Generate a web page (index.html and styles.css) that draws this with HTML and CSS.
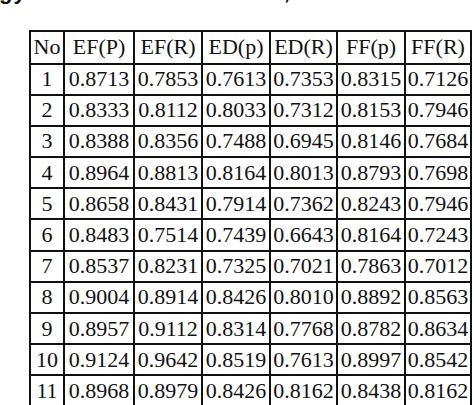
FILE: index.html
```html
<!DOCTYPE html>
<html>
<head>
<meta charset="utf-8">
<link rel="stylesheet" href="styles.css">
</head>
<body>
<div class="caption"><span class="c-g">g</span><span class="c-y">y</span><span class="c-comma">,</span></div>
<table class="results">
<colgroup>
<col class="w-no"><col class="w-a"><col class="w-b"><col class="w-b"><col class="w-c"><col class="w-b"><col class="w-d">
</colgroup>
<thead>
<tr><th>No</th><th>EF(P)</th><th>EF(R)</th><th>ED(p)</th><th>ED(R)</th><th>FF(p)</th><th>FF(R)</th></tr>
</thead>
<tbody>
<tr><td>1</td><td>0.8713</td><td>0.7853</td><td>0.7613</td><td>0.7353</td><td>0.8315</td><td>0.7126</td></tr>
<tr><td>2</td><td>0.8333</td><td>0.8112</td><td>0.8033</td><td>0.7312</td><td>0.8153</td><td>0.7946</td></tr>
<tr><td>3</td><td>0.8388</td><td>0.8356</td><td>0.7488</td><td>0.6945</td><td>0.8146</td><td>0.7684</td></tr>
<tr><td>4</td><td>0.8964</td><td>0.8813</td><td>0.8164</td><td>0.8013</td><td>0.8793</td><td>0.7698</td></tr>
<tr><td>5</td><td>0.8658</td><td>0.8431</td><td>0.7914</td><td>0.7362</td><td>0.8243</td><td>0.7946</td></tr>
<tr><td>6</td><td>0.8483</td><td>0.7514</td><td>0.7439</td><td>0.6643</td><td>0.8164</td><td>0.7243</td></tr>
<tr><td>7</td><td>0.8537</td><td>0.8231</td><td>0.7325</td><td>0.7021</td><td>0.7863</td><td>0.7012</td></tr>
<tr><td>8</td><td>0.9004</td><td>0.8914</td><td>0.8426</td><td>0.8010</td><td>0.8892</td><td>0.8563</td></tr>
<tr><td>9</td><td>0.8957</td><td>0.9112</td><td>0.8314</td><td>0.7768</td><td>0.8782</td><td>0.8634</td></tr>
<tr><td>10</td><td>0.9124</td><td>0.9642</td><td>0.8519</td><td>0.7613</td><td>0.8997</td><td>0.8542</td></tr>
<tr><td>11</td><td>0.8968</td><td>0.8979</td><td>0.8426</td><td>0.8162</td><td>0.8438</td><td>0.8162</td></tr>
</tbody>
</table>
</body>
</html>
```
FILE: styles.css
```css
html, body {
  margin: 0;
  padding: 0;
  background: #ffffff;
  overflow: hidden;
}
body {
  width: 474px;
  height: 405px;
}
.caption {
  display: flex;
  font-family: "Liberation Sans", Arial, sans-serif;
  font-weight: bold;
  font-size: 22px;
  line-height: 22px;
  height: 22px;
  margin-top: -19px;
  color: #111;
}
.c-g { margin-left: -1px; }
.c-y { margin-left: 1px; }
.c-comma { margin-left: 258px; }
.results {
  border-collapse: collapse;
  margin-top: 27px;
  margin-left: 29px;
  width: 441px;
  font-family: "Liberation Serif", "Times New Roman", serif;
  font-size: 22px;
  color: #111;
  table-layout: fixed;
}
.w-no { width: 34px; }
.w-a { width: 70px; }
.w-b { width: 68px; }
.w-c { width: 67px; }
.w-d { width: 66px; }
.results th, .results td {
  border: 2px solid #111;
  padding: 0;
  text-align: center;
  font-weight: normal;
  height: 29.2px;
  line-height: 24px;
  white-space: nowrap;
}
.results th {
  height: 30.5px;
}
```
